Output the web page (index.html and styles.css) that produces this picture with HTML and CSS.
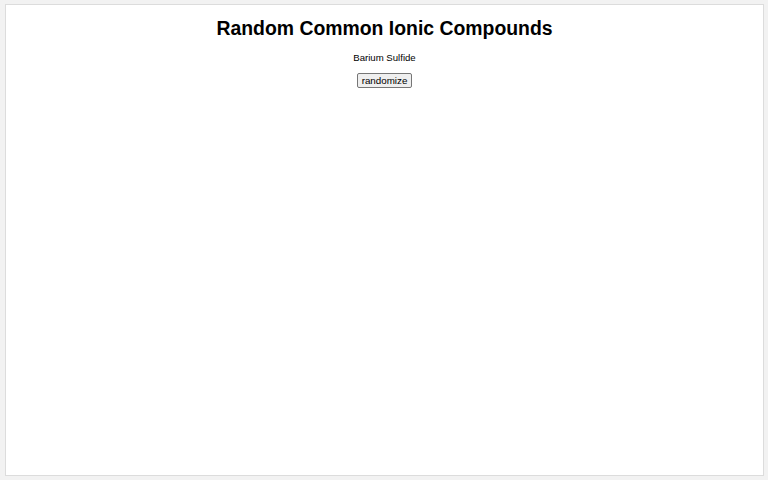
FILE: index.html
```html
<!DOCTYPE html>
<html>
<head>
<meta charset="utf-8">
<link rel="stylesheet" href="styles.css">
</head>
<body>
<div class="panel">
  <h1 class="title">Random Common Ionic Compounds</h1>
  <p class="compound">Barium Sulfide</p>
  <button class="btn">randomize</button>
</div>
</body>
</html>
```
FILE: styles.css
```css
html, body { margin: 0; padding: 0; }
body {
  background: #f2f2f2;
  padding: 4px 4px 4px 5px;
  font-family: "Liberation Sans", Arial, sans-serif;
  box-sizing: border-box;
  height: 480px;
}
.panel {
  background: #fff;
  border: 1px solid #dcdcdc;
  height: 472px;
  box-sizing: border-box;
  text-align: center;
}
.title {
  font-size: 19.4px;
  font-weight: bold;
  margin: 12px 0 0;
  line-height: 23px;
  color: #000;
}
.compound {
  font-size: 9.6px;
  margin: 12px 0 0;
  line-height: 12px;
  color: #000;
}
.btn {
  margin-top: 9px;
  font-family: "Liberation Sans", Arial, sans-serif;
  font-size: 9.8px;
  padding: 0 4px;
  line-height: 13px;
  height: 15px;
  background: #efefef;
  border: 1px solid #767676;
  border-radius: 2px;
  color: #000;
}
```
